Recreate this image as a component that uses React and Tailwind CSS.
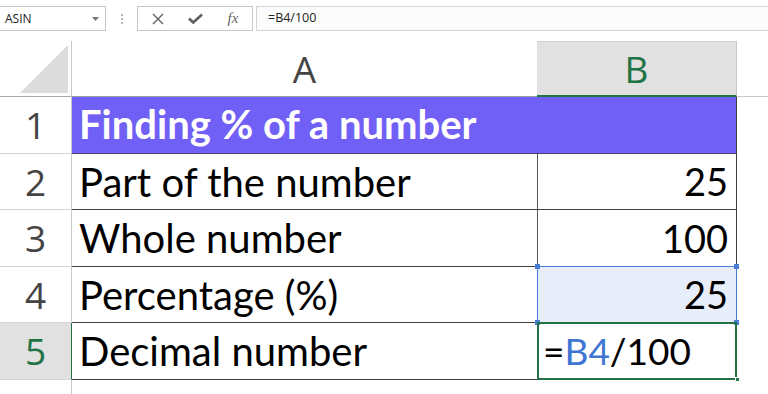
import React from "react";

const cellFont = { fontFamily: "Lato, 'Liberation Sans', sans-serif" };

function RowHead({ n, active, h }) {
  return (
    <div
      className={`w-[72px] shrink-0 flex items-center justify-center border-b border-b-[#d4d4d4] text-[37px] ${
        active ? "bg-[#e1e1e1] text-[#217346] border-r border-r-[#217346]" : "bg-white text-[#444] border-r border-r-[#c8c8c8]"
      } ${h}`}
      style={{ fontFamily: "'Open Sans', sans-serif" }}
    >
      {n}
    </div>
  );
}

export default function App() {
  return (
    <div className="w-[768px] h-[394px] overflow-hidden bg-white relative" style={cellFont}>
      {/* formula bar */}
      <div className="h-[41px] flex items-start pt-[6px]" style={{ fontFamily: "'Open Sans', sans-serif" }}>
        <div className="w-[106px] h-[25px] border-y border-r border-[#c6c6c6] bg-white flex items-center pl-[5px] pr-[6px] text-[12px] text-[#222]">
          <span className="flex-1">ASIN</span>
          <svg width="7" height="4" viewBox="0 0 7 4"><path d="M0 0h7L3.5 4z" fill="#777" /></svg>
        </div>
        <div className="w-[31px] h-[25px] flex flex-col items-center justify-center gap-[2px]">
          <span className="w-[2px] h-[2px] bg-[#b5b5b5]" />
          <span className="w-[2px] h-[2px] bg-[#b5b5b5]" />
          <span className="w-[2px] h-[2px] bg-[#b5b5b5]" />
        </div>
        <div className="w-[116px] h-[25px] border border-[#c6c6c6] bg-white flex items-center">
          <div className="w-[38px] flex justify-center pl-[1px]">
            <svg width="12" height="12" viewBox="0 0 12 12"><path d="M1 1L11 11M11 1L1 11" stroke="#5f5f5f" strokeWidth="1.4" /></svg>
          </div>
          <div className="w-[38px] flex justify-center">
            <svg width="15" height="11" viewBox="0 0 15 11"><path d="M1 5.5L5.2 9.5L14 1.5" stroke="#5f5f5f" strokeWidth="2.6" fill="none" /></svg>
          </div>
          <div className="w-[38px] flex justify-center italic text-[15px] text-[#666]" style={{ fontFamily: "'Liberation Serif', serif" }}>
            fx
          </div>
        </div>
        <div className="flex-1 ml-[3px] h-[25px] border-y border-l border-[#d4d4d4] bg-[#fcfcfc] flex items-center pl-[11px] text-[12.5px] text-[#222]">
          =B4/100
        </div>
      </div>

      {/* column headers */}
      <div className="flex h-[56px]" style={{ fontFamily: "'Open Sans', sans-serif" }}>
        <div className="w-[72px] shrink-0 border-r border-r-[#c8c8c8] border-b border-b-[#ababab] relative">
          <svg className="absolute left-0 top-0" width="71" height="55" viewBox="0 0 71 55">
            <path d="M20 52H68V4z" fill="#dcdcdc" />
          </svg>
        </div>
        <div className="w-[465px] shrink-0 border-b border-b-[#9e9e9e] flex items-center justify-center text-[37px] text-[#444]">
          A
        </div>
        <div className="w-[200px] shrink-0 bg-[#e1e1e1] border-t border-t-[#d0d0d0] border-r border-r-[#c8c8c8] border-b-2 border-b-[#217346] flex items-center justify-center text-[37px] text-[#217346]">
          B
        </div>
        <div className="flex-1 border-b border-b-[#c8c8c8]" />
      </div>

      {/* row 1 */}
      <div className="flex h-[57px]">
        <RowHead n="1" h="h-[57px]" />
        <div className="w-[665px] shrink-0 bg-[#7160f6] border-b border-b-[#4b4470] border-r border-r-[#3b3b3b] flex items-center pl-[7px] pb-[2px] text-white font-bold text-[40px]">
          Finding % of a number
        </div>
        <div className="flex-1" />
      </div>

      {[
        ["2", "Part of the number", "25", "h-[56px]"],
        ["3", "Whole number", "100", "h-[57px]"],
      ].map(([n, a, b, h]) => (
        <div key={n} className={`flex ${h}`}>
          <RowHead n={n} h={h} />
          <div className="w-[465px] shrink-0 border-b border-b-[#404040] flex items-center pl-[7px] text-[40px] text-black">
            {a}
          </div>
          <div className="w-[200px] shrink-0 border-l border-l-[#555] border-r border-r-[#3b3b3b] border-b border-b-[#404040] flex items-center justify-end pr-[8px] text-[38px] text-black">
            {b}
          </div>
          <div className="flex-1" />
        </div>
      ))}

      {/* row 4 */}
      <div className="flex h-[56px]">
        <RowHead n="4" h="h-[56px]" />
        <div className="w-[465px] shrink-0 border-b border-b-[#404040] flex items-center pl-[7px] text-[40px] text-black">
          Percentage (%)
        </div>
        <div className="w-[200px] shrink-0 relative bg-[#e8eef9] border-b border-b-[#404040] flex items-center justify-end pr-[9px] text-[38px] text-black">
          25
          <div className="absolute left-0 right-0 top-[-1px] bottom-[-1px] border border-[#4a7ed6]" />
          <span className="absolute left-[-2px] top-[-3px] w-[5px] h-[5px] bg-[#4a7ed6]" />
          <span className="absolute right-[-2px] top-[-3px] w-[5px] h-[5px] bg-[#4a7ed6]" />
          <span className="absolute left-[-2px] bottom-[-3px] w-[5px] h-[5px] bg-[#4a7ed6]" />
          <span className="absolute right-[-2px] bottom-[-3px] w-[5px] h-[5px] bg-[#4a7ed6]" />
        </div>
        <div className="flex-1" />
      </div>

      {/* row 5 */}
      <div className="flex h-[57px]">
        <RowHead n="5" h="h-[57px]" active />
        <div className="w-[465px] shrink-0 border-b border-b-[#404040] flex items-center pl-[7px] text-[40px] text-black">
          Decimal number
        </div>
        <div className="w-[200px] shrink-0 relative border-b border-b-[#404040] flex items-center pl-[6px] text-[37px] text-black">
          =<span className="text-[#3f76d4]">B4</span>/100
          <div className="absolute left-0 right-0 top-[-1px] bottom-[-1px] border-2 border-[#217346]" />
          <span className="absolute right-[-3px] bottom-[-3px] w-[5px] h-[5px] bg-[#217346] border border-white" />
        </div>
        <div className="flex-1" />
      </div>

      {/* row 6 partial */}
      <div className="flex h-[20px]">
        <div className="w-[72px] shrink-0 border-r border-r-[#c8c8c8]" />
      </div>
    </div>
  );
}
